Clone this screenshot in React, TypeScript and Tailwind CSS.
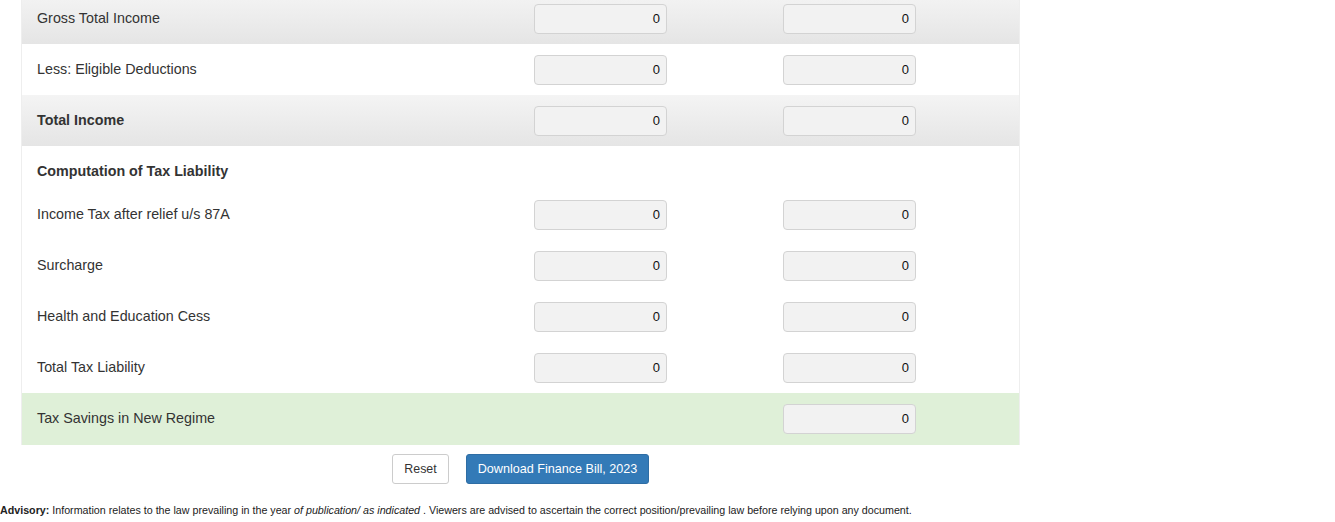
import React from "react";

type Row = {
  label: string;
  bold?: boolean;
  tone: "gray" | "white" | "green";
  first?: boolean;
  second?: boolean;
};

const rowsTop: Row[] = [
  { label: "Gross Total Income", tone: "gray", first: true, second: true },
  { label: "Less: Eligible Deductions", tone: "white", first: true, second: true },
  { label: "Total Income", bold: true, tone: "gray", first: true, second: true },
];

const rowsTax: Row[] = [
  { label: "Income Tax after relief u/s 87A", tone: "white", first: true, second: true },
  { label: "Surcharge", tone: "white", first: true, second: true },
  { label: "Health and Education Cess", tone: "white", first: true, second: true },
  { label: "Total Tax Liability", tone: "white", first: true, second: true },
];

// readonly box with the figure on the right
const Amount = ({ value }: { value: string }) => (
  <div className="flex h-[30px] w-[133px] items-center justify-end rounded-[4px] border border-[#d3d3d3] bg-[#f2f2f2] pr-[6px] text-[13px] text-[#111]">
    {value}
  </div>
);

const toneClass = {
  gray: "bg-linear-to-b from-[#f4f4f4] to-[#e5e5e5]",
  white: "bg-white",
  green: "bg-[#dff0d8]",
};

const LineItem = ({ row, h = "h-[51px]" }: { row: Row; h?: string }) => (
  <div className={`flex items-center ${h} ${toneClass[row.tone]}`}>
    <div className={`w-[512px] pl-[15px] text-[14.3px] text-[#333] ${row.bold ? "font-bold" : ""}`}>
      {row.label}
    </div>
    <div className="w-[249px]">{row.first && <Amount value="0" />}</div>
    <div>{row.second && <Amount value="0" />}</div>
  </div>
);

export default function App() {
  return (
    <div className="h-[522px] w-[1335px] overflow-hidden bg-white font-['Liberation_Sans',Arial,sans-serif]">
      <div className="-mt-[7px] ml-[21px] w-[999px] border-x border-[#eeeeee]">
        {rowsTop.map((r) => (
          <LineItem key={r.label} row={r} />
        ))}
        <div className="flex h-[43px] items-center bg-white pt-[8px] pl-[15px] text-[14.3px] font-bold text-[#333]">
          Computation of Tax Liability
        </div>
        {rowsTax.map((r) => (
          <LineItem key={r.label} row={r} />
        ))}
        <LineItem row={{ label: "Tax Savings in New Regime", tone: "green", second: true }} h="h-[52px]" />
      </div>

      <div className="mt-[9px] ml-[22px] flex w-[997px] justify-center gap-[17px]">
        <button className="h-[30px] w-[57px] rounded-[3px] border border-[#cccccc] bg-white text-[12.4px] text-[#333]">
          Reset
        </button>
        <button className="h-[30px] w-[183px] rounded-[3px] border border-[#2e6da4] bg-[#337ab7] text-[12.6px] text-white">
          Download Finance Bill, 2023
        </button>
      </div>

      <p className="mt-[18px] ml-0 whitespace-nowrap text-[10.7px] text-[#222]">
        <span className="font-bold">Advisory:</span> Information relates to the law prevailing in the year{" "}
        <i>of publication/ as indicated</i> . Viewers are advised to ascertain the correct position/prevailing law
        before relying upon any document.
      </p>
    </div>
  );
}
